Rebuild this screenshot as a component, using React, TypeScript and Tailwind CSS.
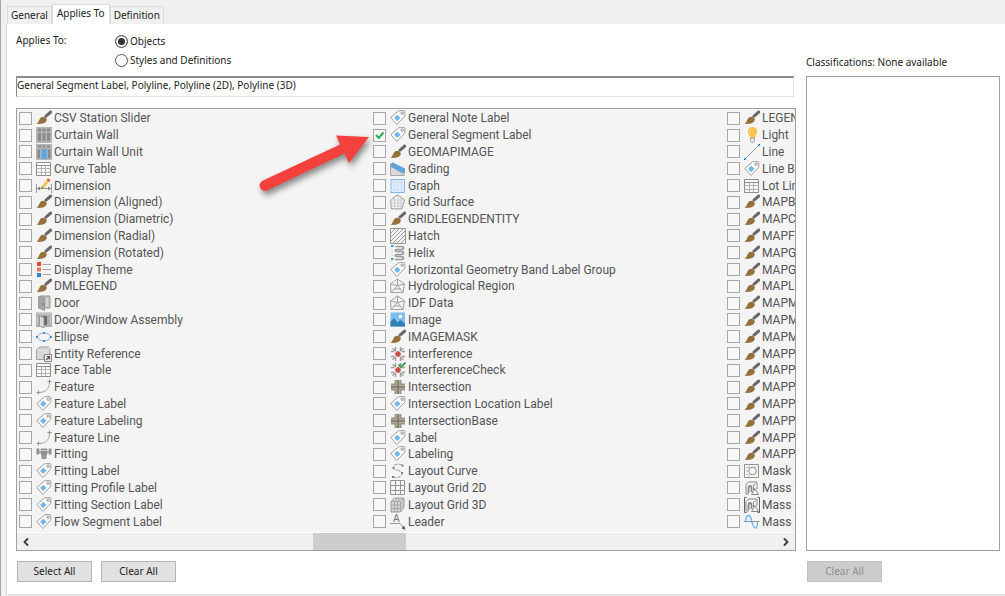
import React, { useState } from 'react';
import { ChevronLeft, ChevronRight } from 'lucide-react';
import clsx from 'clsx';

type IconName =
  | 'brush' | 'curtainWall' | 'curtainUnit' | 'table' | 'dimension' | 'theme' | 'door' | 'doorWindow'
  | 'ellipse' | 'entity' | 'feature' | 'tag' | 'fitting' | 'grading' | 'graph' | 'gridSurface'
  | 'hatch' | 'helix' | 'region' | 'image' | 'interference' | 'interferenceCheck' | 'intersection'
  | 'layoutCurve' | 'grid2d' | 'grid3d' | 'leader' | 'light' | 'line' | 'mask' | 'massElement'
  | 'massGroup' | 'massHaul';

type ObjectType = [icon: IconName, name: string];

const COLUMNS: ObjectType[][] = [
  [
    ['brush', 'CSV Station Slider'],
    ['curtainWall', 'Curtain Wall'],
    ['curtainUnit', 'Curtain Wall Unit'],
    ['table', 'Curve Table'],
    ['dimension', 'Dimension'],
    ['brush', 'Dimension (Aligned)'],
    ['brush', 'Dimension (Diametric)'],
    ['brush', 'Dimension (Radial)'],
    ['brush', 'Dimension (Rotated)'],
    ['theme', 'Display Theme'],
    ['brush', 'DMLEGEND'],
    ['door', 'Door'],
    ['doorWindow', 'Door/Window Assembly'],
    ['ellipse', 'Ellipse'],
    ['entity', 'Entity Reference'],
    ['table', 'Face Table'],
    ['feature', 'Feature'],
    ['tag', 'Feature Label'],
    ['tag', 'Feature Labeling'],
    ['feature', 'Feature Line'],
    ['fitting', 'Fitting'],
    ['tag', 'Fitting Label'],
    ['tag', 'Fitting Profile Label'],
    ['tag', 'Fitting Section Label'],
    ['tag', 'Flow Segment Label'],
  ],
  [
    ['tag', 'General Note Label'],
    ['tag', 'General Segment Label'],
    ['brush', 'GEOMAPIMAGE'],
    ['grading', 'Grading'],
    ['graph', 'Graph'],
    ['gridSurface', 'Grid Surface'],
    ['brush', 'GRIDLEGENDENTITY'],
    ['hatch', 'Hatch'],
    ['helix', 'Helix'],
    ['tag', 'Horizontal Geometry Band Label Group'],
    ['region', 'Hydrological Region'],
    ['region', 'IDF Data'],
    ['image', 'Image'],
    ['brush', 'IMAGEMASK'],
    ['interference', 'Interference'],
    ['interferenceCheck', 'InterferenceCheck'],
    ['intersection', 'Intersection'],
    ['tag', 'Intersection Location Label'],
    ['intersection', 'IntersectionBase'],
    ['tag', 'Label'],
    ['tag', 'Labeling'],
    ['layoutCurve', 'Layout Curve'],
    ['grid2d', 'Layout Grid 2D'],
    ['grid3d', 'Layout Grid 3D'],
    ['leader', 'Leader'],
  ],
  [
    ['brush', 'LEGEND'],
    ['light', 'Light'],
    ['line', 'Line'],
    ['tag', 'Line Between Points Label'],
    ['table', 'Lot Line'],
    ['brush', 'MAPBOOK'],
    ['brush', 'MAPCLOUD'],
    ['brush', 'MAPFRAME'],
    ['brush', 'MAPGRID'],
    ['brush', 'MAPGROUP'],
    ['brush', 'MAPLINE'],
    ['brush', 'MAPMARKER'],
    ['brush', 'MAPMASK'],
    ['brush', 'MAPMODEL'],
    ['brush', 'MAPPAGE'],
    ['brush', 'MAPPATH'],
    ['brush', 'MAPPLAN'],
    ['brush', 'MAPPLOT'],
    ['brush', 'MAPPOINT'],
    ['brush', 'MAPPOLYGON'],
    ['brush', 'MAPPROFILE'],
    ['mask', 'Mask Block'],
    ['massElement', 'Mass Element'],
    ['massGroup', 'Mass Group'],
    ['massHaul', 'Mass Haul Line'],
  ],
];

const burst = (
  <>
    <g stroke="#9a9a9a" strokeWidth="1.4">
      <path d="M5.500 1v3.500L2.500 2.500M10.500 1v3.500l3-2M5.500 15v-3.500l-3 2M10.500 15v-3.500l3 2" />
      <path d="M1 5.500h3.500M15 5.500h-3.500M1 10.500h3.500M15 10.500h-3.500" />
    </g>
    <path d="M8 5v6M5 8h6M6 6l4 4M10 6l-4 4" stroke="#cb5050" strokeWidth="1.600" />
  </>
);

const massShapes = (
  <>
    <path d="M2 4.500 4.500 2H13v7M2 4.500V14h3" stroke="#8a8a8a" />
    <path d="M4.500 13V8q0-2 1.500-2t1.500 2v4" stroke="#8a8a8a" strokeWidth="1.800" />
    <path d="M9.500 10V5l2-1" stroke="#8a8a8a" />
    <path d="M11 8.500 14.500 14.500H7.500z" fill="#f4f4f4" stroke="#858585" />
  </>
);

const ICONS: Record<IconName, React.ReactNode> = {
  brush: (
    <>
      <path d="M10 6.200 14.800 2" stroke="#6a6a6a" strokeWidth="3" strokeLinecap="round" />
      <path d="M.3 13.800C3 12.500 2.800 9.500 5.200 7.300 7.200 5.800 10.200 7 10.700 9c.5 2.600-2.200 4.500-5.200 4.800-1.700.2-3.600.1-5.200 0z" fill="#94703a" />
    </>
  ),
  curtainWall: (
    <>
      <path d="M0 0h16v16H0z" fill="#b4b4b4" />
      <path d="M2 1.500h3v3H2zM6.500 1.500h3v3h-3zM11 1.500h3v3h-3zM2 6h3v8H2zM6.500 6h3v8h-3zM11 6h3v8h-3z" fill="#8b8b8b" />
    </>
  ),
  curtainUnit: (
    <>
      <path d="M0 0h16v16H0z" fill="#b4b4b4" />
      <path d="M2 1.500h3v2H2zM6.500 1.500h3v2h-3zM11 1.500h3v2h-3zM1.500 5.500H4V14H1.500zM12 5.500h2.500V14H12z" fill="#8b8b8b" />
      <path d="M5.500 5h5.500v10H5.500z" fill="#5ea9e3" />
    </>
  ),
  table: (
    <>
      <path d="M.5 1.500h14v13H.5z" fill="#fafafa" stroke="#8c8c8c" />
      <path d="M.5 4.500h14" stroke="#8c8c8c" />
      <path d="M.5 7.500h14M.5 11.500h14M5.500 4.500v10M9.500 4.500v10" stroke="#b0b0b0" />
    </>
  ),
  dimension: (
    <>
      <path d="M.5 6v9M15.500 6v9M1 10.500h14" stroke="#9a9a9a" />
      <path d="M1 10.500 4 8.500v4zM15 10.500l-3-2v4z" fill="#808080" />
      <path d="m5 11 1-3.500L10.500 2 13 4 8.500 9.500z" fill="#f5c65b" />
      <path d="m5 11 .7-2.500L7.500 10z" fill="#777" />
      <path d="m10.500 2 1.500-1.800 2.600 2L13 4z" fill="#e35446" />
    </>
  ),
  theme: (
    <>
      <path d="M1 0h4v4H1z" fill="#e2493c" />
      <path d="M1 5.500h4v4H1z" fill="#de7f4b" />
      <path d="M1 11h4v4H1z" fill="#2f83d4" />
      <path d="M6.500 2.500H15M6.500 7.500H15M6.500 12.500H15" stroke="#a5a5a5" />
    </>
  ),
  door: (
    <>
      <path d="M4 1h10v12H4z" fill="#b9b9b9" stroke="#9b9b9b" />
      <path d="M2.500 1.500 8.500 3v12.500L2.500 13z" fill="#a5a5a5" stroke="#8f8f8f" strokeWidth=".8" />
      <path d="M9.500 2.500h3v9.500h-3z" fill="#d2d2d2" />
      <path d="M7 8v2" stroke="#606060" />
    </>
  ),
  doorWindow: (
    <>
      <path d="M0 .5h16V15H0z" fill="#b0b0b0" />
      <path d="M1 2h14M1.500 4.500v8M14.500 4.500v8" stroke="#cdcdcd" />
      <path d="M7 4h4v9H7z" fill="#686868" />
      <path d="M3.500 4 8 5.500V16l-4.500-2z" fill="#dadada" stroke="#8b8b8b" strokeWidth=".8" />
    </>
  ),
  ellipse: (
    <>
      <ellipse cx="8" cy="8" rx="6.500" ry="4" stroke="#8ea6b9" />
      <path d="M0 7h2v2H0zM14 7h2v2h-2zM7 3h2v2H7zM7 11h2v2H7z" fill="#3e92dc" />
    </>
  ),
  entity: (
    <>
      <path d="M.5 4 3.500 1h9l1.500 1.500V9H8v4.500H.5z" fill="#d5d5d5" stroke="#a0a0a0" />
      <path d="M1 4.500h8.500L13.500 1.500M9.500 4.500V8" stroke="#e9e9e9" />
      <path d="M8.500 8.500h7v7h-7z" fill="#f5f5f5" stroke="#858585" />
      <path d="m10 14 3-3m-2.500-.5h3v3" stroke="#555" strokeWidth="1.200" />
    </>
  ),
  feature: (
    <>
      <path d="M2.500 13.500c7 0 11-3.500 11-10.500" stroke="#a8a8a8" />
      <path d="M.5 13.500h4M2.500 11.500v4M11.500 2.500h4M13.500.5v4" stroke="#939393" />
    </>
  ),
  tag: (
    <>
      <path d="M.8 7.500 8.500.8l5.800-.3.500 1v4.700l-8 8.300z" fill="#fafafa" stroke="#a0a0a0" strokeLinejoin="round" />
      <circle cx="12.200" cy="3.200" r="1.200" stroke="#929292" />
      <path d="m7.200 4.700 3.300 3.100-3.300 3.300-3.100-3.200z" fill="#72b5eb" />
    </>
  ),
  fitting: (
    <>
      <path d="M2 3.500h12v4H2z" fill="#aaa" />
      <path d="M.5 2.500H3v6H.5zM13 2.500h2.500v6H13zM5 2.500h6v6l-1 1H6l-1-1z" fill="#8f8f8f" />
      <path d="M6 9h4v3.500H6z" fill="#a2a2a2" stroke="#8b8b8b" />
      <path d="M3 4.500h10" stroke="#ccc" />
    </>
  ),
  grading: (
    <>
      <path d="M.5 3.500v11h14z" fill="#d9d9d9" stroke="#a8a8a8" />
      <path d="M.5 3 3 1.500 15 7.500v5.500L.5 6z" fill="#63a2d6" />
    </>
  ),
  graph: (
    <>
      <path d="M1 1.500h13.500v13H1z" fill="#deedf9" stroke="#82b8e4" />
      <path d="M1 4.500h13M1 7.500h13M1 11.500h13M4.500 2v12M7.500 2v12M11.500 2v12" stroke="#d0e4f5" />
    </>
  ),
  gridSurface: (
    <>
      <path d="M.8 6 7.500.8l7 5-2.500 9H1.200z" fill="#f7f7f7" stroke="#959595" strokeLinejoin="round" />
      <path d="M1 6h13M1 9h12.500M1 12h11.500M4.500 3.500V15M8 1v14M11 3.500V15" stroke="#cacaca" />
    </>
  ),
  hatch: (
    <>
      <path d="M.5.500h15v15H.5z" fill="#f4f4f4" stroke="#969696" />
      <path d="M1 5 5 1M1 9 9 1M1 13 13 1M3 15 15 3M7 15l8-8M11 15l4-4" stroke="#9b9b9b" />
    </>
  ),
  helix: (
    <>
      <path d="M5.500 1.500H11c3.500 0 3.500 3 0 3H7c-2.500 0-2.500 2 0 2h4c3.500 0 3.500 3 0 3H7c-2.500 0-2.500 2 0 2h4c3.500 0 3.500 3 0 3H5" stroke="#999" strokeWidth="1.600" />
      <path d="M1 0h2.500v2H1zM1 13h2.500v2H1z" fill="#4298df" />
      <path d="M2 4v8" stroke="#bbb" strokeDasharray="1 2" />
    </>
  ),
  region: (
    <path d="M7.500 1 .5 6l.5 8.500h12L14.500 6zM7.500 1v6.500M7.500 7.500.5 6M7.500 7.500l7-1.500M7.500 7.500 1 14.500M7.500 7.500l5.500 7M4 11h6.500" stroke="#a0a0a0" strokeLinejoin="round" />
  ),
  image: (
    <>
      <path d="M.5.500h14.500v14H.5z" fill="#7fbdec" />
      <path d="M.5 9.500 4 6l3.500 4.500L10.500 8 15 11.500v3H.5z" fill="#317eb8" />
      <circle cx="10.500" cy="4.500" r="1.800" fill="#fff" />
    </>
  ),
  interference: burst,
  interferenceCheck: (
    <>
      {burst}
      <path d="m8.500 2.500 2.300 2.500L15.500.5" stroke="#3bab61" strokeWidth="2" />
    </>
  ),
  intersection: (
    <>
      <path d="M4.500 1h7v14h-7zM1 4.500h14v7H1z" fill="#959595" />
      <path d="M6.500 1v5.500H1M9.500 1v5.500H15M6.500 15V9.500H1M9.500 15V9.500H15" stroke="#b9ad7b" />
      <path d="M8 1v14M1 8h14" stroke="#707070" />
    </>
  ),
  layoutCurve: (
    <>
      <path d="M12.500 2.500C9 0 3 1 3.500 4.500 4 8 11.500 6.500 12 10.500c.3 3.500-5 4.500-8.500 3.500" stroke="#989898" strokeDasharray="4 1" />
      <path d="M11.500 1.500h2v2h-2zM2.500 4h2v2h-2zM11 9h2v2h-2zM2 13h2v2H2z" fill="#808080" />
    </>
  ),
  grid2d: (
    <path d="M.5.500h14v14H.5zM5.500.5v14M10.500.5v14M.5 5.500h14M.5 10.500h14" stroke="#959595" />
  ),
  grid3d: (
    <>
      <path d="M1 4.500 4.500 1H14v9.500L10.500 15H1z" fill="#d5d5d5" stroke="#9b9b9b" />
      <path d="M1 4.500h9.500V15M10.500 4.500 14 1M4.500 4.500V15M7.500 4.500V15M1 8h9.500L14 4.500M1 11.500h9.500L14 7.500M4.500 4.500 8 1M7.500 4.500 11 1" stroke="#a8a8a8" />
    </>
  ),
  leader: (
    <>
      <text x="3" y="8" fontSize="10" fontFamily="Liberation Sans, sans-serif" fill="#777">A</text>
      <path d="M0 9.500h10l3.500 4" stroke="#989898" />
      <path d="m15.500 16-4-1.800 2.800-2.500z" fill="#555" />
    </>
  ),
  light: (
    <>
      <path d="M8.500 0C5.500 0 3.800 2 3.800 4.500c0 2.200 2 3.700 2.400 6.500h4.600c.4-2.800 2.400-4.300 2.400-6.500C13.200 2 11.500 0 8.500 0z" fill="#fbc14f" />
      <path d="M6.500 11h4v3l-1 1.500h-2l-1-1.500z" fill="#e5e5e5" stroke="#9b9b9b" strokeWidth=".8" />
      <path d="M6.500 2.500c-1 1-1 2.500-.3 3.800" stroke="#fde1a5" />
    </>
  ),
  line: (
    <>
      <path d="M1 15 15 1" stroke="#929292" />
      <path d="M0 14h2v2H0zM14 0h2v2h-2z" fill="#3e92dc" />
    </>
  ),
  mask: (
    <>
      <path d="M.5 1.500h14v13H.5z" fill="#f7f7f7" stroke="#929292" />
      <path d="M2 4.500h2.500M2 8h2M2 11.500h2.500M5 3v2M5 11.500v2M11.500 3v1M12.500 4h2" stroke="#bbb" />
      <circle cx="8.500" cy="8" r="3.800" stroke="#8b8b8b" />
    </>
  ),
  massElement: massShapes,
  massGroup: (
    <>
      {massShapes}
      <path d="M2.500.5h-2v15h2M13.500.5h2v15h-2" stroke="#606060" />
    </>
  ),
  massHaul: (
    <>
      <path d="M0 7.500h15.500" stroke="#8b8b8b" />
      <path d="M1.500 7.500C2 3 3 1.500 4.500 1.500c2.500 0 2.500 4 3.500 7s1.500 5.500 3.500 5.500c1.500 0 2-3 2-6.500" stroke="#6cb0e8" strokeWidth="1.300" />
    </>
  ),
};

const ObjectIcon = ({ name }: { name: IconName }) => (
  <svg viewBox="0 0 16 16" fill="none" className="w-4 h-4 shrink-0" aria-hidden="true">
    {ICONS[name]}
  </svg>
);

interface ObjectRowProps {
  icon: IconName;
  name: string;
  checked: boolean;
  onToggle: (name: string) => void;
}

const ObjectRow = ({ icon, name, checked, onToggle }: ObjectRowProps) => (
  <label className="flex items-center pl-[2px] min-h-0 whitespace-nowrap">
    <span className="relative w-[13px] h-[13px] mr-1 shrink-0">
      <input
        type="checkbox"
        checked={checked}
        onChange={() => onToggle(name)}
        className="peer block appearance-none w-[13px] h-[13px] border border-[#a6a6a6] bg-[#f7f7f7]"
      />
      <svg viewBox="0 0 13 13" fill="none" className="absolute inset-0 hidden peer-checked:block pointer-events-none">
        <path d="m3 6 2.800 3 4.700-5.500" stroke="#2fae59" strokeWidth="2" />
      </svg>
    </span>
    <ObjectIcon name={icon} />
    <span className="ml-[2px] leading-4">{name}</span>
  </label>
);

const Radio = ({ label, checked, onChange }: { label: string; checked: boolean; onChange: () => void }) => (
  <label className="flex items-center gap-[2px] h-[19px]">
    <input
      type="radio"
      name="target"
      checked={checked}
      onChange={onChange}
      className="appearance-none w-[13px] h-[13px] rounded-full border border-[#555] bg-white checked:bg-[#333] checked:shadow-[inset_0_0_0_2px_white]"
    />
    {label}
  </label>
);

const TABS = ['General', 'Applies To', 'Definition'];

const buttonClass = 'w-[75px] h-[21px] border border-[#b5b5b5] bg-[#e1e1e1]';

export default function App() {
  const [tab, setTab] = useState('Applies To');
  const [target, setTarget] = useState('objects');
  const [summary, setSummary] = useState('General Segment Label, Polyline, Polyline (2D), Polyline (3D)');
  const [selected, setSelected] = useState<string[]>(['General Segment Label']);

  const toggle = (name: string) =>
    setSelected(prev => (prev.includes(name) ? prev.filter(n => n !== name) : [...prev, name]));

  return (
    <div className="min-h-screen flex flex-col bg-[#f0f0f0] border-l border-[#a5a5a5] pl-[5px] pt-1 font-['Noto_Sans',sans-serif] text-[10px] text-[#222]">
      <div role="tablist" className="flex items-end h-5 pl-px">
        {TABS.map(name => (
          <button
            key={name}
            role="tab"
            aria-selected={tab === name}
            onClick={() => setTab(name)}
            className={clsx(
              'border border-b-0 border-[#dcdcdc] whitespace-nowrap',
              tab === name ? 'h-5 px-1 pb-[2px] bg-white' : 'h-[18px] px-[3px] pb-px bg-[#f0f0f0]'
            )}
          >
            {name}
          </button>
        ))}
      </div>

      <main className="flex items-stretch gap-[10px] bg-white border-l border-b border-[#dcdcdc] pl-[9px] pr-[5px] pt-2 pb-3">
        <section className="flex-1 min-w-0 flex flex-col">
          <fieldset className="flex">
            <legend className="float-left w-[99px] h-4 leading-4">Applies To:</legend>
            <div>
              <Radio label="Objects" checked={target === 'objects'} onChange={() => setTarget('objects')} />
              <Radio label="Styles and Definitions" checked={target === 'styles'} onChange={() => setTarget('styles')} />
            </div>
          </fieldset>

          <input
            type="text"
            aria-label="Selected objects"
            value={summary}
            onChange={e => setSummary(e.target.value)}
            className="mt-[6px] mr-[2px] h-[21px] pb-1 border border-t-2 border-t-[#8a8a8a] border-l-[#8a8a8a] border-r-[#e3e3e3] border-b-[#e3e3e3] bg-white outline-none"
          />

          <div className="relative mt-[11px] border border-[#a0a0a0] bg-[#f4f4f4]">
            <div className="overflow-hidden pt-px pb-[2px] font-[Roboto,sans-serif] text-[12px] text-[#555]">
              <div className="flex h-[420px]">
                {COLUMNS.map((column, i) => (
                  <div key={i} className="grid grid-rows-[repeat(25,minmax(0,1fr))] w-[354px] shrink-0">
                    {column.map(([icon, name]) => (
                      <ObjectRow key={name} icon={icon} name={name} checked={selected.includes(name)} onToggle={toggle} />
                    ))}
                  </div>
                ))}
              </div>
            </div>

            <div className="flex h-[18px] bg-[#f0f0f0] border-t border-white text-[#444]">
              <button aria-label="Scroll left" className="w-[18px] flex items-center justify-center">
                <ChevronLeft size={12} strokeWidth={4} />
              </button>
              <div className="flex-1">
                <div className="h-full w-1/8 ml-[37.5%] bg-[#cdcdcd]" />
              </div>
              <button aria-label="Scroll right" className="w-[18px] flex items-center justify-center">
                <ChevronRight size={12} strokeWidth={4} />
              </button>
            </div>

            <svg
              viewBox="0 0 120 70"
              className="absolute left-[238px] top-[16px] w-[120px] h-[70px] pointer-events-none drop-shadow-[2px_4px_3px_rgba(0,0,0,0.45)]"
              aria-hidden="true"
            >
              <path d="M8 55.500 85 19.500 81 10.500 114 12 94 38 89.500 28.500 12 65.500A5 5 0 0 1 8 55.500z" fill="#f5413d" />
            </svg>
          </div>

          <div className="flex gap-[9px] mt-[10px] pl-px">
            <button className={buttonClass} onClick={() => setSelected(COLUMNS.flat().map(([, name]) => name))}>
              Select All
            </button>
            <button className={buttonClass} onClick={() => setSelected([])}>
              Clear All
            </button>
          </div>
        </section>

        <section className="w-[194px] shrink-0 flex flex-col">
          <h2 className="h-11 pt-[22px] leading-4">Classifications: None available</h2>
          <div className="flex-1 border border-[#a0a0a0] bg-white" />
          <button disabled className="mt-[10px] ml-px w-[75px] h-[21px] border border-[#c3c3c3] bg-[#cccccc] text-[#8f8f8f]">
            Clear All
          </button>
        </section>
      </main>
    </div>
  );
}
